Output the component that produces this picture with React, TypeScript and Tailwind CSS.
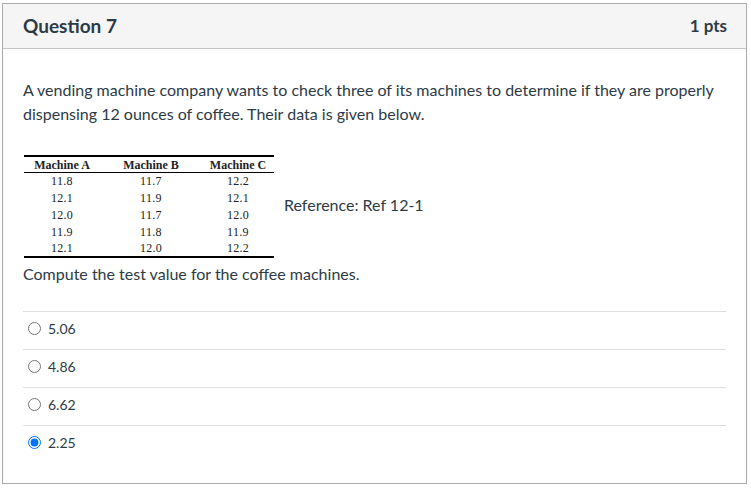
import React from "react";

const rows = [
  ["11.8", "11.7", "12.2"],
  ["12.1", "11.9", "12.1"],
  ["12.0", "11.7", "12.0"],
  ["11.9", "11.8", "11.9"],
  ["12.1", "12.0", "12.2"],
];

const answers = [
  { label: "5.06", checked: false },
  { label: "4.86", checked: false },
  { label: "6.62", checked: false },
  { label: "2.25", checked: true },
];

function DataTable() {
  return (
    <table className="w-[250px] border-collapse border-t-2 border-b-2 border-black font-['Liberation_Serif',serif] text-[12px] leading-none text-[#222]">
      <colgroup>
        <col className="w-[76px]" />
        <col className="w-[102px]" />
        <col className="w-[72px]" />
      </colgroup>
      <thead>
        <tr className="h-[16px] border-b border-black">
          <th className="pb-[1px] align-bottom font-bold">Machine A</th>
          <th className="pb-[1px] align-bottom font-bold">Machine B</th>
          <th className="pb-[1px] align-bottom font-bold">Machine C</th>
        </tr>
      </thead>
      <tbody>
        {rows.map((r, i) => (
          <tr key={i} className="h-[17px]">
            {r.map((v, j) => (
              <td key={j} className="pb-[2px] text-center align-bottom text-[12px] tracking-[0.3px]">
                {v}
              </td>
            ))}
          </tr>
        ))}
      </tbody>
    </table>
  );
}

export default function App() {
  return (
    <div className="min-h-[488px] w-[751px] bg-white pl-[2px] pt-[3px] font-['Lato',sans-serif] text-[#2d3b45]">
      <div className="flex h-[481px] w-[745px] flex-col border border-[#aaaaaa]">
        <div className="flex h-[45px] items-center justify-between border-b border-[#c7c7c7] bg-[#f5f5f5] pl-[20px] pr-[19px]">
          <h2 className="text-[19px] font-bold">Question 7</h2>
          <span className="text-[17px] font-bold">1 pts</span>
        </div>

        <div className="px-[20px] pt-[29px]">
          <p className="text-[16px] leading-[24px]">
            A vending machine company wants to check three of its machines to determine if they are properly
            dispensing 12 ounces of coffee. Their data is given below.
          </p>

          <div className="mt-[29px] flex items-center gap-[10px] pl-[1px]">
            <DataTable />
            <span className="pb-[3px] text-[16px]">Reference: Ref 12-1</span>
          </div>

          <p className="mt-[4px] text-[16px] leading-[24px]">Compute the test value for the coffee machines.</p>

          <ul className="mt-[25px]">
            {answers.map((a) => (
              <li
                key={a.label}
                className="flex h-[38px] items-center border-t border-[#dddddd] pb-[5px] pl-[5px] text-[14px]"
              >
                <label className="flex items-center gap-[7px]">
                  <input type="radio" name="q7" defaultChecked={a.checked} className="m-0 h-[13px] w-[13px]" />
                  <span>{a.label}</span>
                </label>
              </li>
            ))}
          </ul>
        </div>
      </div>
    </div>
  );
}
